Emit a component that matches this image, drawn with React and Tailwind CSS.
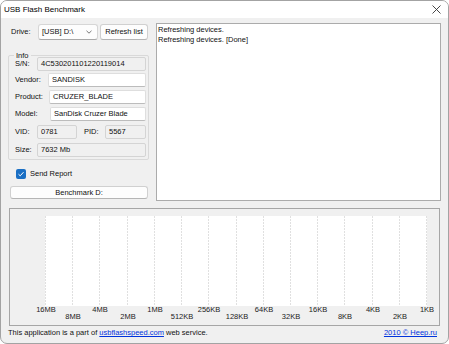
import React from "react";

const labels = ["16MB","8MB","4MB","2MB","1MB","512KB","256KB","128KB","64KB","32KB","16KB","8KB","4KB","2KB","1KB"];

function Field({ children, w, ro }) {
  return (
    <div
      className={
        "h-[14px] flex items-center pl-[3px] border rounded-[2px] " +
        (ro ? "bg-[#f0f0f0] border-[#d4d4d4]" : "bg-white border-[#dedede] border-b-[#bcbcbc]")
      }
      style={{ width: w }}
    >
      {children}
    </div>
  );
}

export default function App() {
  const step = 381 / 14;
  return (
    <div className="w-[449px] h-[344px] bg-[#f0f0f0] border border-[#a3a3a3] rounded-[7px] overflow-hidden flex flex-col text-[7.5px] leading-none text-[#111] font-['Liberation_Sans',Arial,sans-serif]">
      {/* title bar */}
      <div className="h-[17px] shrink-0 bg-white flex items-center justify-between pl-[3px] pr-[7px]">
        <span className="text-[8px] text-black">USB Flash Benchmark</span>
        <svg width="9" height="9" viewBox="0 0 9 9">
          <path d="M0.5 0.5 L8.5 8.5 M8.5 0.5 L0.5 8.5" stroke="#333" strokeWidth="0.9" fill="none" />
        </svg>
      </div>

      {/* top section */}
      <div className="flex mt-[5px] h-[178px] shrink-0">
        <div className="ml-[7px] w-[141px] flex flex-col">
          <div className="mt-[1px] h-[16px] flex items-center">
            <span className="w-[30px] pl-[3px]">Drive:</span>
            <div className="w-[60px] h-[16px] bg-[#fdfdfd] border border-[#d6d6d6] border-b-[#a8a8a8] rounded-[3px] flex items-center justify-between pl-[3px] pr-[5px]">
              <span>[USB] D:\</span>
              <svg width="6" height="4" viewBox="0 0 6 4">
                <path d="M0.5 0.8 L3 3.2 L5.5 0.8" stroke="#555" strokeWidth="0.8" fill="none" />
              </svg>
            </div>
            <div className="ml-[2px] w-[48px] h-[16px] bg-[#fdfdfd] border border-[#d0d0d0] border-b-[#b5b5b5] rounded-[3px] flex items-center justify-center">
              Refresh list
            </div>
          </div>

          {/* Info group */}
          <div className="relative mt-[15px] w-[141px] border border-[#d9d9d9] rounded-[2px] pt-[1px] pb-[2px] pr-[2px]">
            <span className="absolute -top-[4px] left-[5px] px-[2px] bg-[#f0f0f0]">Info</span>
            <div className="flex items-center h-[14px]">
              <span className="w-[28px] pl-[6px]">S/N:</span>
              <Field w={109} ro>4C530201101220119014</Field>
            </div>
            <div className="flex items-center h-[14px] mt-[2px]">
              <span className="w-[39px] pl-[6px]">Vendor:</span>
              <Field w={98}>SANDISK</Field>
            </div>
            <div className="flex items-center h-[14px] mt-[3px]">
              <span className="w-[40px] pl-[6px]">Product:</span>
              <Field w={97}>CRUZER_BLADE</Field>
            </div>
            <div className="flex items-center h-[14px] mt-[3px]">
              <span className="w-[41px] pl-[6px]">Model:</span>
              <Field w={96}>SanDisk Cruzer Blade</Field>
            </div>
            <div className="flex items-center h-[14px] mt-[4px]">
              <span className="w-[28px] pl-[6px]">VID:</span>
              <Field w={40} ro>0781</Field>
              <span className="w-[28px] pl-[7px]">PID:</span>
              <Field w={41} ro>5567</Field>
            </div>
            <div className="flex items-center h-[14px] mt-[4px]">
              <span className="w-[28px] pl-[6px]">Size:</span>
              <Field w={109} ro>7632 Mb</Field>
            </div>
          </div>

          <div className="mt-[9px] h-[10px] flex items-center ml-[8px]">
            <div className="w-[10px] h-[10px] rounded-[2px] bg-[#1a6fc4] flex items-center justify-center">
              <svg width="8" height="8" viewBox="0 0 8 8">
                <path d="M1.5 4.2 L3.2 5.8 L6.5 2.2" stroke="white" strokeWidth="1" fill="none" />
              </svg>
            </div>
            <span className="ml-[4px]">Send Report</span>
          </div>

          <div className="mt-[7px] ml-[2px] w-[138px] h-[13px] bg-[#fdfdfd] border border-[#d0d0d0] border-b-[#b5b5b5] rounded-[3px] flex items-center justify-center">
            Benchmark D:
          </div>
        </div>

        {/* log */}
        <div className="ml-[7px] w-[285px] h-[178px] bg-white border border-[#ababab] pl-[1px] pt-[1px] leading-[9.5px]">
          <div>Refreshing devices.</div>
          <div>Refreshing devices. [Done]</div>
        </div>
      </div>

      {/* chart */}
      <div className="mt-[7px] ml-[8px] w-[431px] h-[118px] shrink-0 border border-[#a6a6a6] pt-[7px] pl-[35px]">
        <div className="relative w-[382px] h-[90px]">
          <svg width="382" height="90" className="block">
            <rect x="0" y="0" width="382" height="90" fill="white" />
            {labels.map((_, i) => (
              <line
                key={i}
                x1={Math.round(i * step) + 0.5}
                x2={Math.round(i * step) + 0.5}
                y1="0"
                y2="90"
                stroke="#e0e0e0"
                strokeWidth="1"
                strokeDasharray="2 1"
              />
            ))}
          </svg>
          {labels.map((l, i) => (
            <span
              key={l}
              className="absolute -translate-x-1/2 whitespace-nowrap text-[#222]"
              style={{ left: Math.round(i * step) + 1, top: i % 2 === 0 ? 90 : 97 }}
            >
              {l}
            </span>
          ))}
        </div>
      </div>

      {/* footer */}
      <div className="h-[14px] shrink-0 flex items-center justify-between pl-[7px] pr-[11px]">
        <span>
          This application is a part of{" "}
          <span className="text-[#0033dd] underline">usbflashspeed.com</span> web service.
        </span>
        <span className="text-[#0033dd] underline">2010 © Heep.ru</span>
      </div>
    </div>
  );
}
